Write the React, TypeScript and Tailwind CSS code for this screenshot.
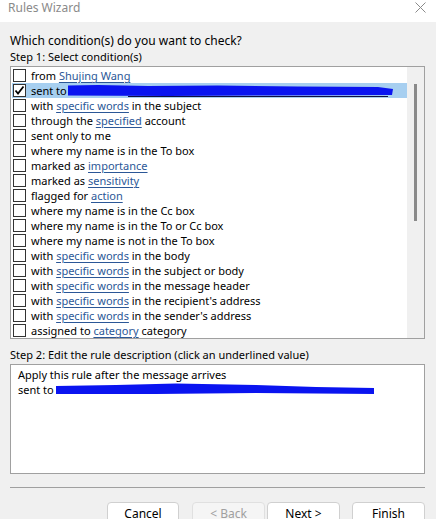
import React from "react";

const L = ({ children }: { children: React.ReactNode }) => (
  <span className="text-[#2b5797] underline underline-offset-[2px] decoration-[#2b5797]">{children}</span>
);

const rows: React.ReactNode[] = [
  <>from <L>Shujing Wang</L></>,
  <>sent to </>,
  <>with <L>specific words</L> in the subject</>,
  <>through the <L>specified</L> account</>,
  <>sent only to me</>,
  <>where my name is in the To box</>,
  <>marked as <L>importance</L></>,
  <>marked as <L>sensitivity</L></>,
  <>flagged for <L>action</L></>,
  <>where my name is in the Cc box</>,
  <>where my name is in the To or Cc box</>,
  <>where my name is not in the To box</>,
  <>with <L>specific words</L> in the body</>,
  <>with <L>specific words</L> in the subject or body</>,
  <>with <L>specific words</L> in the message header</>,
  <>with <L>specific words</L> in the recipient's address</>,
  <>with <L>specific words</L> in the sender's address</>,
  <>assigned to <L>category</L> category</>,
];

function Check({ checked }: { checked?: boolean }) {
  return (
    <div className="w-[13px] h-[13px] border border-[#333] bg-white flex items-center justify-center shrink-0">
      {checked && (
        <svg width="11" height="11" viewBox="0 0 11 11">
          <path d="M1.5 5.5 L4 8.5 L9.5 1.5" stroke="#000" strokeWidth="1.8" fill="none" />
        </svg>
      )}
    </div>
  );
}

function Btn({ children, disabled }: { children: React.ReactNode; disabled?: boolean }) {
  return (
    <div
      className={`w-[73px] h-[24px] rounded-[4px] border flex items-center justify-center text-[12px] ${
        disabled ? "border-[#e0e0e0] bg-[#f5f5f5] text-[#a0a0a0]" : "border-[#d0d0d0] bg-white text-black"
      }`}
    >
      {children}
    </div>
  );
}

export default function App() {
  return (
    <div
      className="w-[436px] h-[519px] bg-[#f0f0f0] overflow-hidden text-[11px] text-black"
      style={{ fontFamily: '"Noto Sans", "Open Sans", sans-serif' }}
    >
      <div className="h-[22px] bg-white flex items-start justify-between pl-[8px] pr-[10px]">
        <span className="text-[12px] text-[#8a8a8a] leading-[15px]">Rules Wizard</span>
        <svg width="11" height="11" viewBox="0 0 11 11" className="mt-[2px]">
          <path d="M0.5 0.5 L10.5 10.5 M10.5 0.5 L0.5 10.5" stroke="#8a8a8a" strokeWidth="1" />
        </svg>
      </div>
      <div className="pl-[10px] pr-[11px]">
        <div className="mt-[11px] leading-[16px] text-[12px]">Which condition(s) do you want to check?</div>
        <div className="leading-[16px]">Step 1: Select condition(s)</div>
        <div className="mt-[1px] h-[273px] border border-[#a0a0a0] bg-white flex">
          <div className="flex-1 pt-[1px] pl-[1px]">
            {rows.map((r, i) => (
              <div
                key={i}
                className={`relative h-[15px] flex items-center pl-[1px] ${i === 1 ? "bg-[#a7cff0]" : ""}`}
              >
                <Check checked={i === 1} />
                <span className="ml-[5px] leading-[15px] whitespace-nowrap">{r}</span>
                {i === 1 && (
                  <svg className="absolute left-[56px] top-0" width="330" height="15" viewBox="0 0 330 15">
                    <path d="M0 2.5 L30 2 L80 3 L150 2.5 L230 3.5 L310 4 L325 6 L324 12 L200 12.5 L100 13 L0 12.5 Z" fill="#0a14f0" />
                    <path d="M60 13.5 L320 13.5" stroke="#101040" strokeWidth="1" />
                  </svg>
                )}
              </div>
            ))}
          </div>
          <div className="w-[17px] bg-[#f0f0f0] flex justify-center pt-[17px]">
            <div className="w-[3px] h-[137px] bg-[#8a8a8a]" />
          </div>
        </div>
        <div className="mt-[8px] leading-[16px]">Step 2: Edit the rule description (click an underlined value)</div>
        <div className="mt-[1px] h-[110px] border border-[#a0a0a0] bg-white pl-[7px] pt-[2px]">
          <div className="leading-[15px]">Apply this rule after the message arrives</div>
          <div className="relative leading-[15px] flex">
            <span>sent to</span>
            <svg className="absolute left-[38px] top-0" width="320" height="15" viewBox="0 0 320 15">
              <path d="M0 4 L60 3 L120 1.5 L200 3 L260 5 L318 6 L318 12 L200 11 L100 12 L0 12 Z" fill="#0a14f0" />
            </svg>
          </div>
        </div>
        <div className="mt-[13px] h-px bg-[#a0a0a0] w-[415px]" />
        <div className="mt-[14px] flex pl-[97px]">
          <Btn>Cancel</Btn>
          <div className="ml-[13px]">
            <Btn disabled>&lt; Back</Btn>
          </div>
          <div className="ml-[2px]">
            <Btn>Next &gt;</Btn>
          </div>
          <div className="ml-[12px]">
            <Btn>Finish</Btn>
          </div>
        </div>
      </div>
    </div>
  );
}
